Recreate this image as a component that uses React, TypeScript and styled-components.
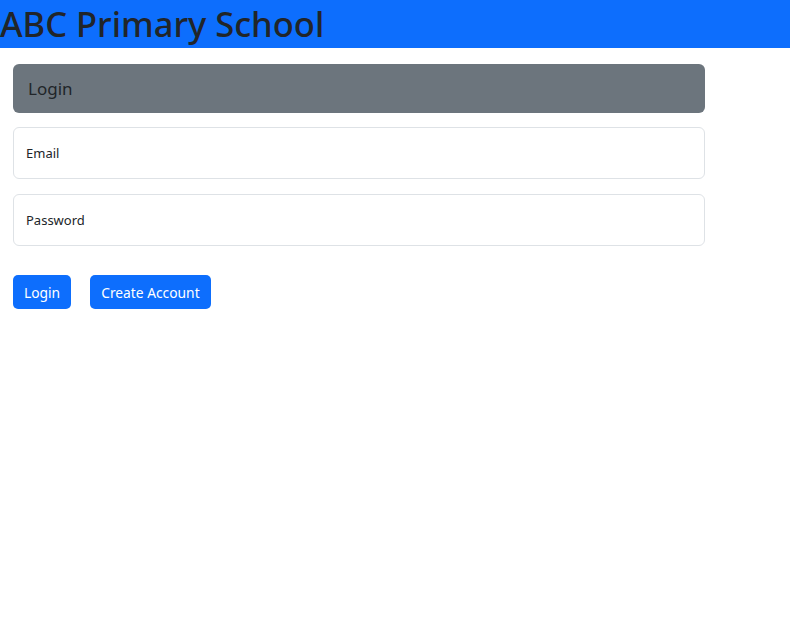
import React from "react";
import styled, { createGlobalStyle } from "styled-components";

const GlobalStyle = createGlobalStyle`
  body {
    margin: 0;
    font-family: "Noto Sans", "Open Sans", sans-serif;
    color: #212529;
    background: #fff;
  }
`;

const Header = styled.header`
  height: 48px;
  background: #0d6efd;
  display: flex;
  align-items: flex-start;
`;

const Title = styled.h1`
  margin: 0;
  padding-top: 3px;
  font-size: 34.5px;
  font-weight: 500;
  line-height: 1.2;
  color: #212529;
`;

const Main = styled.main`
  width: 692px;
  padding: 16px 13px;
  display: flex;
  flex-direction: column;
`;

const CardHeader = styled.div`
  height: 49px;
  background: #6c757d;
  border-radius: 6px;
  display: flex;
  align-items: center;
  padding: 0 15px;
  font-size: 17px;
  box-sizing: border-box;
`;

const Field = styled.div<{ $gap: number }>`
  height: 52px;
  border: 1px solid #dee2e6;
  border-radius: 6px;
  box-sizing: border-box;
  display: flex;
  align-items: center;
  padding: 0 12px;
  font-size: 13px;
  margin-top: ${p => p.$gap}px;
`;

const Actions = styled.div`
  display: flex;
  gap: 19px;
  margin-top: 29px;
`;

const Button = styled.button`
  height: 34px;
  padding: 0 11px;
  border: none;
  border-radius: 5px;
  background: #0d6efd;
  color: #fff;
  font-family: inherit;
  font-size: 13.8px;
`;

export default function App() {
  return (
    <>
      <GlobalStyle />
      <Header>
        <Title>ABC Primary School</Title>
      </Header>
      <Main>
        <CardHeader>Login</CardHeader>
        <Field $gap={14}>Email</Field>
        <Field $gap={15}>Password</Field>
        <Actions>
          <Button>Login</Button>
          <Button>Create Account</Button>
        </Actions>
      </Main>
    </>
  );
}
